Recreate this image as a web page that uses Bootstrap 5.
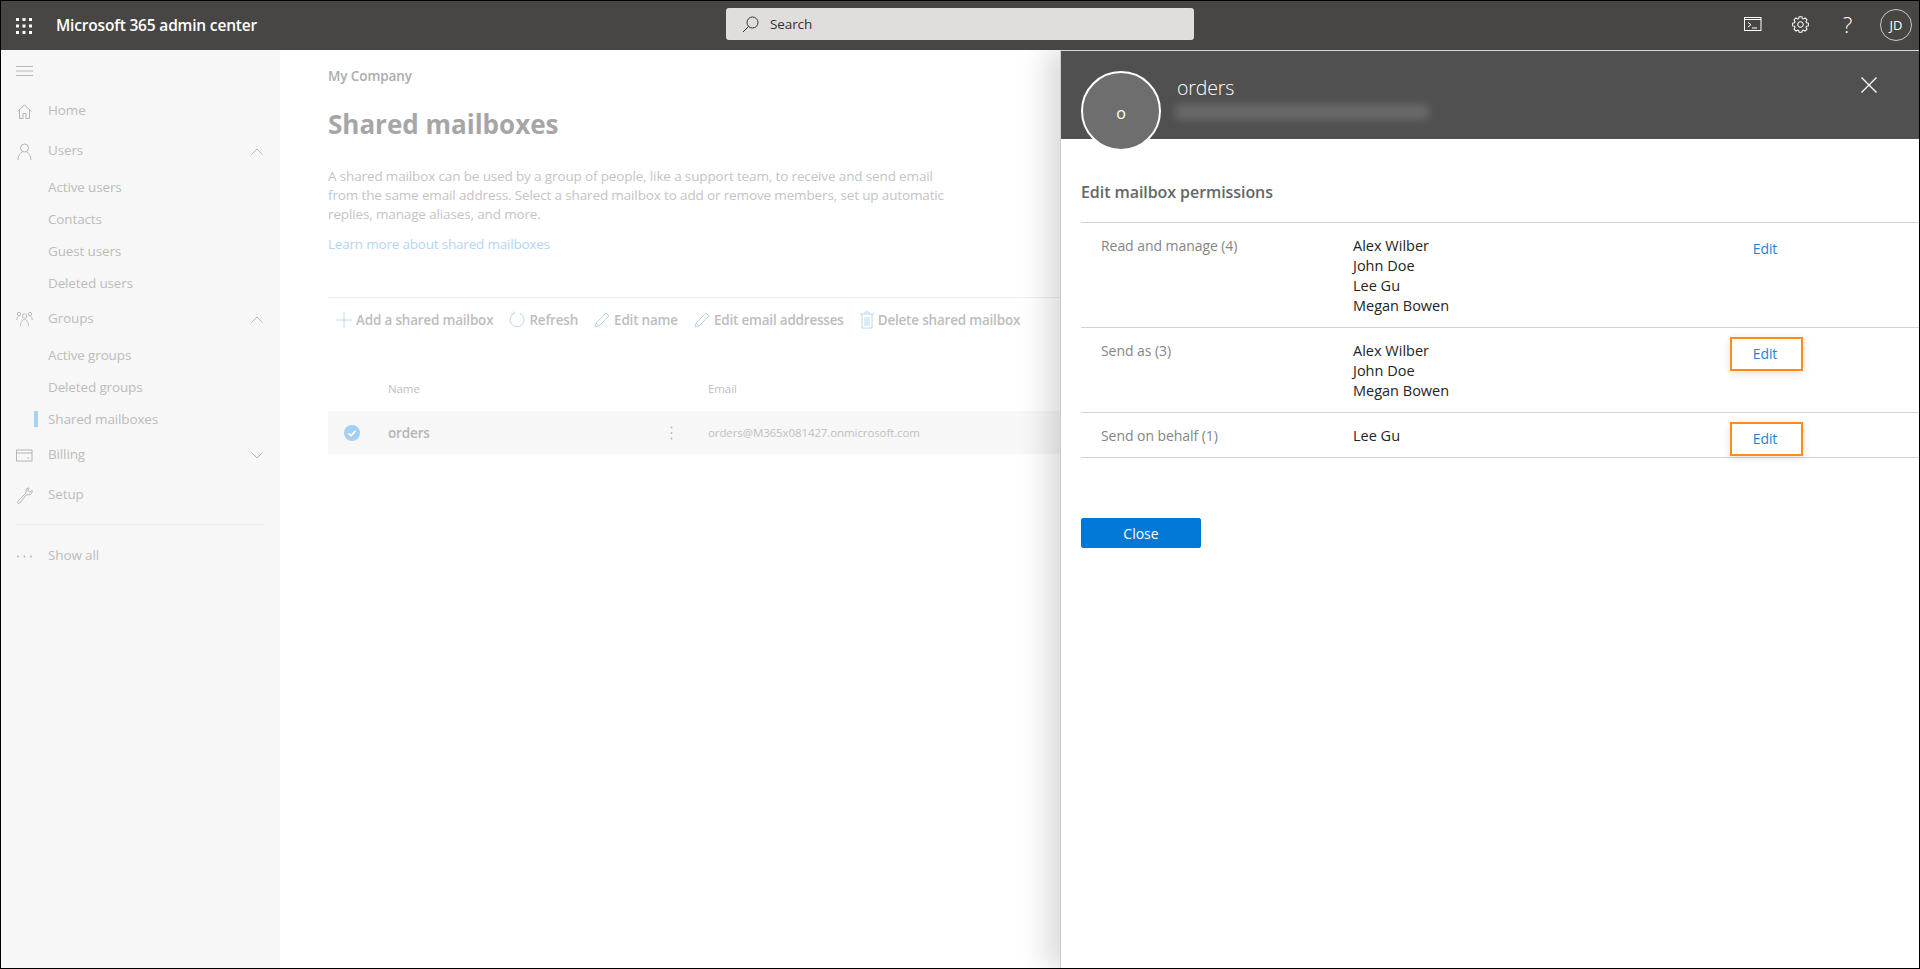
<!DOCTYPE html>
<html lang="en">
<head>
<meta charset="utf-8">
<title>Shared mailboxes</title>
<link href="https://cdn.jsdelivr.net/npm/bootstrap@5.3.0/dist/css/bootstrap.min.css" rel="stylesheet">
<style>
html,body{margin:0;height:100%;overflow:hidden;background:#fff}
body{font-family:"Open Sans","Noto Sans","Liberation Sans",sans-serif;font-size:14px}
.frame{position:relative;height:969px;border:1px solid #000;overflow:hidden}
.topbar{height:49px;background:#484644;color:#fff;padding:0;position:relative;z-index:3;flex-wrap:nowrap}
.waffle{width:16px;height:16px;margin-left:15px;margin-right:24px;flex:none}
.apptitle{font-size:15.5px;font-weight:600;letter-spacing:-.18px;color:#fff}
.searchbox{position:absolute;left:725px;top:7px;width:468px;height:32px;background:#dfdedc;border-radius:3px;color:#323130;padding-left:16px;gap:11px}
.searchbox span{font-size:13.5px;letter-spacing:-.1px}
.tools{position:absolute;right:0;top:0;height:49px}
.tool{position:absolute;top:0;color:#fff}
.t-term{left:-175px;top:16px}.t-gear{left:-127px;top:15px}.t-help{left:-76px;top:9px;font-size:22px;font-weight:300;line-height:28px}
.t-me{left:-39px;top:8px;width:32px;height:32px;border:1px solid #c8c8c8;border-radius:50%;font-size:13px;line-height:30px;text-align:center}
.workspace{height:918px}
.sidebar{width:279px;flex:none;background:#f7f7f7;color:#bcbcbc;padding-top:0}
.burger{height:41px;padding-left:15px}
.navrow{height:40px;padding-left:15px;padding-right:17px;position:relative}
.navrow .gl{width:17px;height:17px;flex:none;margin-right:15px;color:#b5b5b5}
.navrow .chev{margin-left:auto;color:#b5b5b5}
.subrow{height:32px;padding-left:47px;position:relative}
.subrow.on::before{content:"";position:absolute;left:33px;top:8px;width:4px;height:16px;background:#a6d2f3}
.sb-lbl{font-size:13.5px;letter-spacing:-.14px}
.navrow .sb-lbl{position:relative;top:-1px}
.sb-rule{height:1px;background:#ebebeb;margin:9px 15px 11px 15px}
.pagebody{flex:1;padding:16px 0 0 48px;min-width:0;white-space:nowrap}
.crumb{font-size:13.5px;line-height:20px;font-weight:600;color:#acacac;letter-spacing:-.1px}
.pagehead{font-size:26px;font-weight:700;line-height:40px;margin:18px 0 0;color:#a6a6a6}
.intro{margin:23px 0 0;line-height:19px;color:#c4c4c4;font-size:13.5px;letter-spacing:-.14px}
.morelink{display:block;margin-top:10px;line-height:20px;color:#b3d6f0;text-decoration:none;font-size:13.5px;letter-spacing:-.2px}
.rulefade{height:1px;background:#f0f0f0;margin-top:43px}
.tbar{height:44px;padding-left:8px;color:#bdbdbd;font-weight:600;font-size:13.5px;letter-spacing:-.2px}
.tbtn{display:flex;align-items:center}
.tbtn svg{flex:none;color:#b9d8f2}
.hdrrow{height:69px;padding-top:37px;font-size:11.5px;color:#c0c0c0;letter-spacing:-.1px;line-height:20px}
.datarow{height:43px;background:#f7f7f7;color:#b5b5b5}
.c-sel{width:60px;padding-left:16px;flex:none}
.c-name{width:320px;flex:none;padding-right:35px}
.orderslbl{font-weight:600;font-size:13.5px;letter-spacing:-.15px;position:relative;top:1px}
.mailtxt{font-size:11.5px;color:#c0c0c0;letter-spacing:-.1px}
.slidein{position:absolute;top:49px;right:0;width:859px;bottom:0;background:#fff;border-left:1px solid #ccc;border-top:1px solid #d6d6d6;box-shadow:-14px 0 26px rgba(0,0,0,.14);z-index:2}
.slidehead{height:88px;background:#505050;color:#fff;padding-left:20px}
.bigav{width:80px;height:80px;margin-top:20px;margin-bottom:-12px;border:2px solid #fff;border-radius:50%;background:#6e6e6e;color:#fff;font-size:16px;flex:none;padding-top:3px}
.headtxt{margin-left:15px;margin-top:23px}
.obj{font-size:19.5px;line-height:28px;font-weight:300;letter-spacing:-.15px;padding-left:1px}
.blurred{width:252px;height:14px;margin-top:3px;background:#6a6c6b;filter:blur(4px)}
.xbtn{margin-left:auto;margin-right:42px;margin-top:26px;background:none;border:0;padding:0;line-height:0;color:#fff}
.slidebody{padding:41px 0 0 20px}
.permtitle{font-size:16px;line-height:24px;font-weight:600;color:#666;margin:0 0 18px;letter-spacing:-.07px}
.permrow{border-top:1px solid #d2d2d2;padding:13px 0 11px 20px;line-height:20px;font-size:14px;letter-spacing:-.06px}
.permrow:last-of-type{border-bottom:1px solid #d2d2d2}
.permname{width:252px;flex:none;color:#858585}
.permwho{width:377px;flex:none;color:#242424;font-size:14.5px;letter-spacing:0}
.permedit{width:73px;height:34px;margin-top:-4px;margin-bottom:-10px;padding-right:3px;color:#1f82d8;text-decoration:none;border:2px solid transparent;flex:none}
.permedit.hl{border-color:#ff8c1a;box-shadow:0 2px 8px rgba(0,0,0,.12)}
.closebtn{--bs-btn-bg:#0078d7;--bs-btn-border-color:#0078d7;--bs-btn-border-radius:2px;--bs-btn-font-size:14px;--bs-btn-padding-y:0;width:120px;height:30px;margin-top:60px}
</style>
</head>
<body>
<div class="frame d-flex flex-column">
  <nav class="navbar topbar d-flex align-items-center justify-content-start">
    <svg class="waffle" viewBox="0 0 16 16" fill="#fff"><rect x="0" y="0" width="3" height="3"/><rect x="6.5" y="0" width="3" height="3"/><rect x="13" y="0" width="3" height="3"/><rect x="0" y="6.5" width="3" height="3"/><rect x="6.5" y="6.5" width="3" height="3"/><rect x="13" y="6.5" width="3" height="3"/><rect x="0" y="13" width="3" height="3"/><rect x="6.5" y="13" width="3" height="3"/><rect x="13" y="13" width="3" height="3"/></svg>
    <span class="apptitle">Microsoft 365 admin center</span>
    <div class="searchbox d-flex align-items-center">
      <svg width="17" height="17" viewBox="0 0 17 17" fill="none" stroke="#323130"><circle cx="10.5" cy="6.5" r="5.5"/><path d="M6.5 10.5 1 16"/></svg>
      <span>Search</span>
    </div>
    <div class="tools">
      <svg class="tool t-term" width="18" height="15" viewBox="0 0 18 15" fill="none" stroke="#fff"><rect x=".5" y=".5" width="16.5" height="13"/><path d="M.5 2.500h16.500M4 5.500l3 2.200-3 2.200M8 11h5"/></svg>
      <svg class="tool t-gear" width="17" height="17" viewBox="-8 -8 16 16" fill="none" stroke="#fff" stroke-width=".95"><polygon points="5.13,2.72 6.14,4.31 4.31,6.14 2.72,5.13 1.7,5.55 1.3,7.39 -1.3,7.39 -1.7,5.55 -2.72,5.13 -4.31,6.14 -6.14,4.31 -5.13,2.72 -5.55,1.7 -7.39,1.3 -7.39,-1.3 -5.55,-1.7 -5.13,-2.72 -6.14,-4.31 -4.31,-6.14 -2.72,-5.13 -1.7,-5.55 -1.3,-7.39 1.3,-7.39 1.7,-5.55 2.72,-5.13 4.31,-6.14 6.14,-4.31 5.13,-2.72 5.55,-1.7 7.39,-1.3 7.39,1.3 5.55,1.7"/><circle r="2.6"/></svg>
      <span class="tool t-help">?</span>
      <span class="tool t-me">JD</span>
    </div>
  </nav>
  <div class="workspace d-flex">
    <aside class="sidebar d-flex flex-column">
      <div class="burger d-flex align-items-center">
        <svg width="17" height="10" viewBox="0 0 17 10" stroke="#b5b5b5"><path d="M0 .5h17M0 5h17M0 9.5h17"/></svg>
      </div>
      <nav class="nav flex-column">
        <div class="navrow d-flex align-items-center">
          <svg class="gl" viewBox="0 0 17 17" fill="none" stroke="currentColor"><path d="M1.5 8.5 8.5 2l7 6.5M3.5 7v8.5h3.5v-5h3v5h3.5V7"/></svg>
          <span class="sb-lbl">Home</span>
        </div>
        <div class="navrow d-flex align-items-center">
          <svg class="gl" viewBox="0 0 17 17" fill="none" stroke="currentColor"><circle cx="8.5" cy="5" r="4"/><path d="M2 17c0-4.500 2.500-7.500 4.500-8M15 17c0-4.500-2.500-7.500-4.500-8"/></svg>
          <span class="sb-lbl">Users</span>
          <svg class="chev" width="12" height="7" viewBox="0 0 12 7" fill="none" stroke="currentColor"><path d="M.5 6.500 6 1l5.500 5.500"/></svg>
        </div>
        <div class="subrow d-flex align-items-center"><span class="sb-lbl">Active users</span></div>
        <div class="subrow d-flex align-items-center"><span class="sb-lbl">Contacts</span></div>
        <div class="subrow d-flex align-items-center"><span class="sb-lbl">Guest users</span></div>
        <div class="subrow d-flex align-items-center"><span class="sb-lbl">Deleted users</span></div>
        <div class="navrow d-flex align-items-center">
          <svg class="gl" viewBox="0 0 17 17" fill="none" stroke="currentColor" stroke-width=".9"><circle cx="8.500" cy="5" r="2.200"/><circle cx="3" cy="3" r="1.700"/><circle cx="14" cy="3" r="1.700"/><path d="M4.500 15c0-4 2-6.500 4-6.500s4 2.500 4 6.500M.8 9c0-2.500 1-4 2.700-4M16.200 9c0-2.500-1-4-2.700-4"/></svg>
          <span class="sb-lbl">Groups</span>
          <svg class="chev" width="12" height="7" viewBox="0 0 12 7" fill="none" stroke="currentColor"><path d="M.5 6.500 6 1l5.500 5.500"/></svg>
        </div>
        <div class="subrow d-flex align-items-center"><span class="sb-lbl">Active groups</span></div>
        <div class="subrow d-flex align-items-center"><span class="sb-lbl">Deleted groups</span></div>
        <div class="subrow on d-flex align-items-center"><span class="sb-lbl">Shared mailboxes</span></div>
        <div class="navrow d-flex align-items-center">
          <svg class="gl" viewBox="0 0 17 17" fill="none" stroke="currentColor"><rect x=".5" y="3" width="15.500" height="11"/><path d="M.5 6h15.500M11 11h2"/></svg>
          <span class="sb-lbl">Billing</span>
          <svg class="chev" width="12" height="7" viewBox="0 0 12 7" fill="none" stroke="currentColor"><path d="M.5.500 6 6l5.500-5.500"/></svg>
        </div>
        <div class="navrow d-flex align-items-center">
          <svg class="gl" viewBox="0 0 17 17" fill="none" stroke="currentColor"><path d="M9.500 6.500 10.500 1.800 13 .8l-1.300 2.700 2 1.500 2.500-1.500c.3 2-1 4-3 4.300-1 .1-1.700 0-2.500-.4L3.800 16c-1 1-2.800-.3-2-1.700z"/></svg>
          <span class="sb-lbl">Setup</span>
        </div>
        <div class="sb-rule"></div>
        <div class="navrow d-flex align-items-center">
          <svg class="gl" viewBox="0 0 17 17" fill="#b5b5b5"><circle cx="2" cy="8.500" r="1"/><circle cx="8.500" cy="8.500" r="1"/><circle cx="15" cy="8.500" r="1"/></svg>
          <span class="sb-lbl">Show all</span>
        </div>
      </nav>
    </aside>
    <main class="pagebody">
      <div class="crumb">My Company</div>
      <h1 class="pagehead">Shared mailboxes</h1>
      <p class="intro">A shared mailbox can be used by a group of people, like a support team, to receive and send email<br>from the same email address. Select a shared mailbox to add or remove members, set up automatic<br>replies, manage aliases, and more.</p>
      <a class="morelink" href="#">Learn more about shared mailboxes</a>
      <div class="rulefade"></div>
      <div class="tbar d-flex align-items-center">
        <div class="tbtn"><svg width="16" height="16" viewBox="0 0 16 16" stroke="currentColor" fill="none"><path d="M8 0v16M0 8h16"/></svg><span class="ms-1">Add a shared mailbox</span></div>
        <div class="tbtn ms-3"><svg width="16" height="18" viewBox="0 0 16 18" stroke="currentColor" fill="none"><path d="M5 2.500a7 7 0 1 0 6 0M5 .5v2.500h-3"/></svg><span class="ms-1">Refresh</span></div>
        <div class="tbtn ms-3"><svg width="16" height="16" viewBox="0 0 16 16" stroke="currentColor" fill="none"><path d="M1 15l1-4L12 1l3 3L5 14zM2 11l3 3"/></svg><span class="ms-1">Edit name</span></div>
        <div class="tbtn ms-3"><svg width="16" height="16" viewBox="0 0 16 16" stroke="currentColor" fill="none"><path d="M1 15l1-4L12 1l3 3L5 14zM2 11l3 3"/></svg><span class="ms-1">Edit email addresses</span></div>
        <div class="tbtn ms-3"><svg width="14" height="18" viewBox="0 0 14 18" stroke="currentColor" fill="none"><path d="M0 3h14M5 3V1h4v2M2 3v14h10V3M5 6v9M7 6v9M9 6v9"/></svg><span class="ms-1">Delete shared mailbox</span></div>
      </div>
      <div class="hdrrow d-flex"><div class="c-sel"></div><div class="c-name">Name</div><div>Email</div></div>
      <div class="datarow d-flex align-items-center">
        <div class="c-sel d-flex"><svg width="16" height="16" viewBox="0 0 16 16"><circle cx="8" cy="8" r="8" fill="#a3d0f2"/><path d="M4.500 8.300 7 10.700l4.500-5" fill="none" stroke="#fff" stroke-width="1.700"/></svg></div>
        <div class="c-name d-flex align-items-center justify-content-between"><span class="orderslbl">orders</span><svg width="3" height="14" viewBox="0 0 3 14" fill="#bbb"><circle cx="1.500" cy="1.500" r="1"/><circle cx="1.500" cy="7" r="1"/><circle cx="1.500" cy="12.500" r="1"/></svg></div>
        <div class="mailtxt">orders@M365x081427.onmicrosoft.com</div>
      </div>
    </main>
  </div>
  <section class="slidein">
    <header class="slidehead d-flex align-items-start">
      <div class="bigav d-flex align-items-center justify-content-center">o</div>
      <div class="headtxt">
        <div class="obj">orders</div>
        <div class="blurred"></div>
      </div>
      <button class="xbtn" type="button" aria-label="Close"><svg width="16" height="16" viewBox="0 0 16 16" stroke="#fff" stroke-width="1.300"><path d="M.5.500l15 15M15.500.500l-15 15"/></svg></button>
    </header>
    <div class="slidebody">
      <h2 class="permtitle">Edit mailbox permissions</h2>
      <div class="permrow d-flex"><div class="permname">Read and manage (4)</div><div class="permwho">Alex Wilber<br>John Doe<br>Lee Gu<br>Megan Bowen</div><a class="permedit d-flex align-items-center justify-content-center" href="#">Edit</a></div>
      <div class="permrow d-flex"><div class="permname">Send as (3)</div><div class="permwho">Alex Wilber<br>John Doe<br>Megan Bowen</div><a class="permedit hl d-flex align-items-center justify-content-center" href="#">Edit</a></div>
      <div class="permrow d-flex"><div class="permname">Send on behalf (1)</div><div class="permwho">Lee Gu</div><a class="permedit hl d-flex align-items-center justify-content-center" href="#">Edit</a></div>
      <button class="btn btn-primary closebtn d-block" type="button">Close</button>
    </div>
  </section>
</div>
<script src="https://cdn.jsdelivr.net/npm/bootstrap@5.3.0/dist/js/bootstrap.bundle.min.js"></script>
</body>
</html>
